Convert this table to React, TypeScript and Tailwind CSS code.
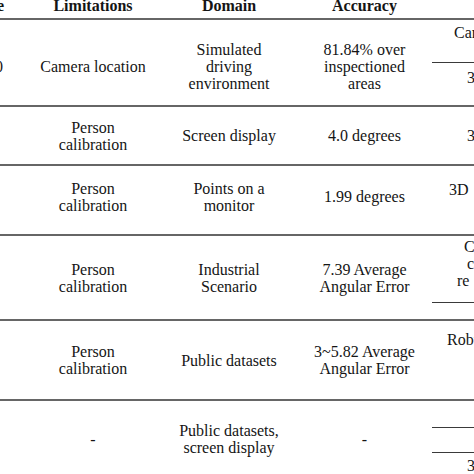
import React from 'react';

const cols = 'grid grid-cols-[70px_136px_136px_135px_200px]';
const line = 'border-b-2 border-[#666]';

function Cell({ children, className = '' }: { children?: React.ReactNode; className?: string }) {
  return <div className={`flex items-center justify-center text-center ${className}`}>{children}</div>;
}

function SubLine() {
  return <div className="h-px w-full bg-[#3a3a3a]" />;
}

export default function App() {
  return (
    <div
      className="w-[474px] h-[474px] overflow-hidden bg-white text-[#151515] text-[16px] leading-[17px]"
      style={{ fontFamily: '"Liberation Serif", "Times New Roman", serif' }}
    >
      <div className="ml-[-45px] w-[677px]">
        {/* Header */}
        <div className={`${cols} h-[20px] ${line} font-bold`}>
          <div className="text-right pr-[21px] -mt-[3px]">Type</div>
          <div className="text-center -mt-[3px]">Limitations</div>
          <div className="text-center -mt-[3px]">Domain</div>
          <div className="text-center -mt-[3px]">Accuracy</div>
          <div className="text-left pl-[60px] -mt-[3px]">Hardware</div>
        </div>

        {/* Row 1 */}
        <div className={`${cols} h-[87px] ${line}`}>
          <div className="flex items-center justify-end pr-[22px] pt-[7px]">2020</div>
          <Cell className="pt-[7px]">Camera location</Cell>
          <Cell className="pt-[7px]">
            Simulated
            <br />
            driving
            <br />
            environment
          </Cell>
          <Cell className="pt-[7px]">
            81.84% over
            <br />
            inspectioned
            <br />
            areas
          </Cell>
          <div className="flex flex-col">
            <div className="h-[42px] pt-[4px] pl-[22px]">Camera</div>
            <SubLine />
            <div className="pt-[6px] pl-[35px]">3D sensor</div>
          </div>
        </div>

        {/* Row 2 */}
        <div className={`${cols} h-[59px] ${line}`}>
          <div />
          <Cell>
            Person
            <br />
            calibration
          </Cell>
          <Cell>Screen display</Cell>
          <Cell>4.0 degrees</Cell>
          <div className="flex items-center pl-[35px]">3D model</div>
        </div>

        {/* Row 3 */}
        <div className={`${cols} h-[70px] ${line}`}>
          <div />
          <Cell className="pb-[7px]">
            Person
            <br />
            calibration
          </Cell>
          <Cell className="pb-[7px]">
            Points on a
            <br />
            monitor
          </Cell>
          <Cell className="pb-[7px]">1.99 degrees</Cell>
          <div className="pt-[15px] pl-[17px]">3D&nbsp;&nbsp;&nbsp;&nbsp;eye model</div>
        </div>

        {/* Row 4 */}
        <div className={`${cols} h-[85px] ${line}`}>
          <div />
          <Cell>
            Person
            <br />
            calibration
          </Cell>
          <Cell>
            Industrial
            <br />
            Scenario
          </Cell>
          <Cell>
            7.39 Average
            <br />
            Angular Error
          </Cell>
          <div className="flex flex-col pt-[2px]">
            <div className="pl-[32px]">Camera</div>
            <div className="pl-[35px]">calibration</div>
            <div className="pl-[25px]">re&nbsp;&nbsp;quired</div>
            <div className="mt-[13px]">
              <SubLine />
            </div>
          </div>
        </div>

        {/* Row 5 */}
        <div className={`${cols} h-[80px] ${line}`}>
          <div />
          <Cell>
            Person
            <br />
            calibration
          </Cell>
          <Cell>Public datasets</Cell>
          <Cell>
            3~5.82 Average
            <br />
            Angular Error
          </Cell>
          <div className="pt-[10px] pl-[15px]">Robust</div>
        </div>

        {/* Row 6 */}
        <div className={`${cols} h-[80px]`}>
          <div />
          <Cell className="pb-[4px]">-</Cell>
          <Cell className="pb-[4px]">
            Public datasets,
            <br />
            screen display
          </Cell>
          <Cell className="pb-[4px]">-</Cell>
          <div className="flex flex-col">
            <div className="mt-[26px]">
              <SubLine />
            </div>
            <div className="mt-[24px]">
              <SubLine />
            </div>
            <div className="pt-[4px] pl-[35px]">3D</div>
          </div>
        </div>
      </div>
    </div>
  );
}
